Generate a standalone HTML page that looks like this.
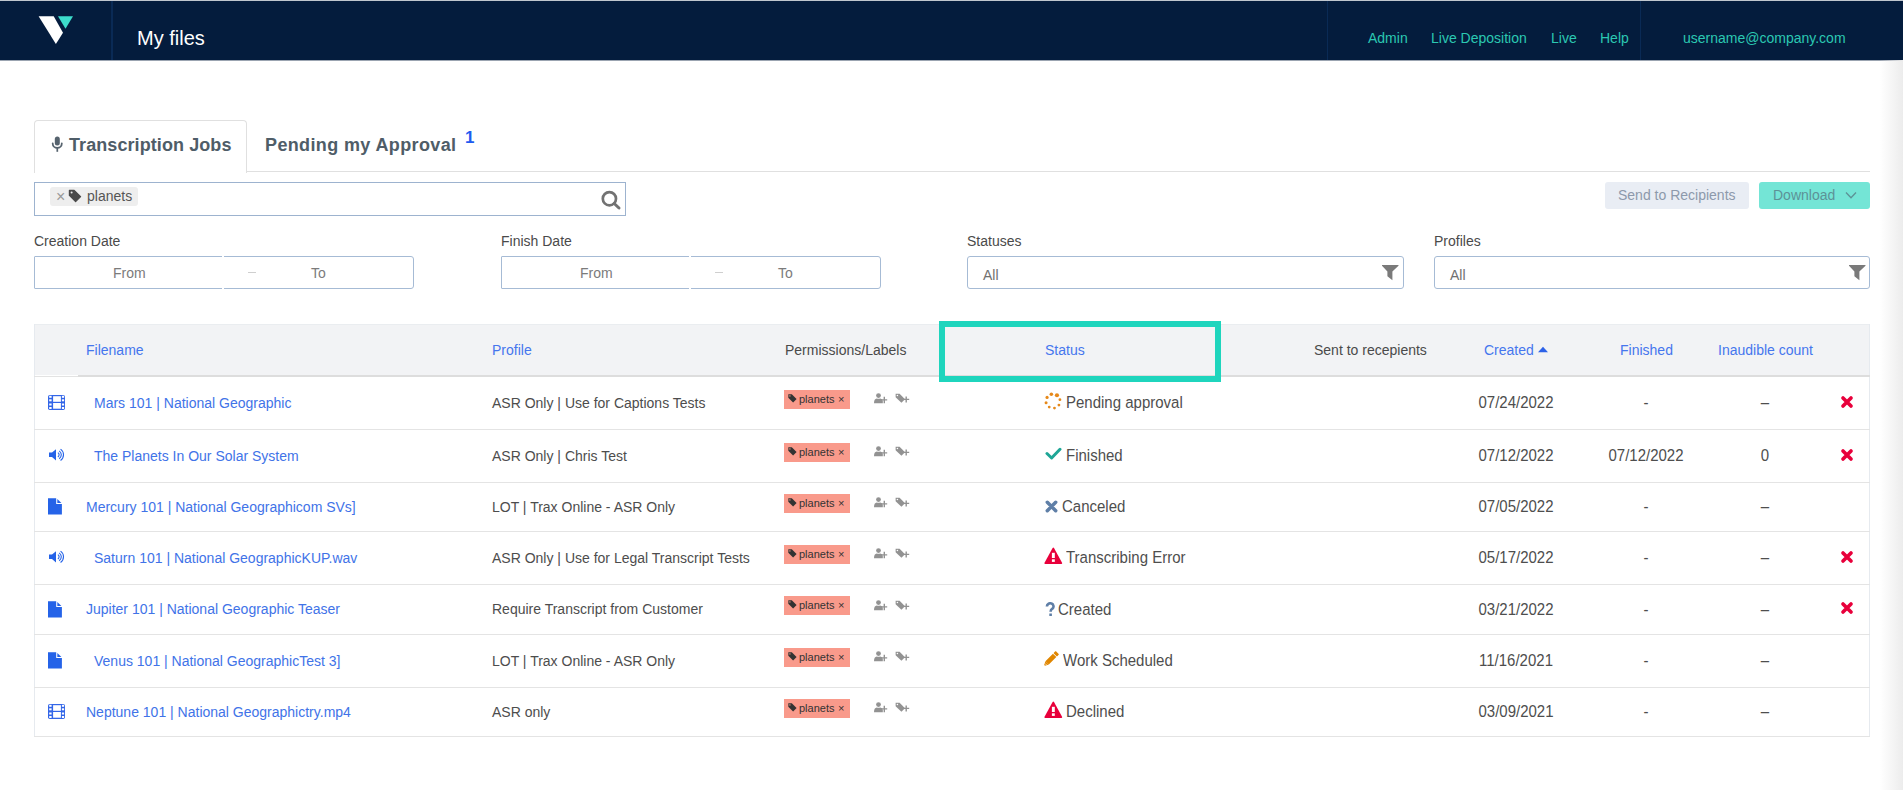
<!DOCTYPE html>
<html><head><meta charset="utf-8">
<style>
*{box-sizing:border-box;margin:0;padding:0}
html,body{width:1903px;height:790px;overflow:hidden;background:#fff;font-family:"Liberation Sans",sans-serif;color:#444}
.a{position:absolute;white-space:nowrap}
#hdr{position:absolute;left:0;top:1px;width:1903px;height:59px;background:#041c3d}
.nav{font-size:14px;line-height:14px;color:#2bc8b2}
.lbl{font-size:14px;line-height:14px;color:#4a4a4a}
.inp{position:absolute;border:1px solid #a6bbd5;border-radius:3px;height:33px;background:#fff}
.rng{border-radius:1px 3px 3px 1px}
.ph{font-size:14px;line-height:14px;color:#7b7b7b}
.th{font-size:14px;line-height:14px;top:343px;color:#4a4a4a}
.th.b{color:#4576ee}
.td{font-size:14px;line-height:14px;color:#4d4d4d}
.fn{color:#4173e8}
.chip{width:66px;height:19px;background:#f99a8b;font-size:11px;line-height:11px;color:#333}
.st{font-size:15px;line-height:15px;color:#4e4e4e;transform:scaleY(1.07);transform-origin:0 12.7px}
.ctr{width:200px;text-align:center}
</style></head><body>
<!-- HEADER -->
<div class="a" style="left:0;top:0;width:1903px;height:1px;background:rgba(4,28,61,0.25)"></div>
<div class="a" style="left:0;top:60px;width:1903px;height:1px;background:rgba(4,28,61,0.4)"></div>
<div id="hdr">
  <svg class="a" style="left:0;top:-1px" width="120" height="60" viewBox="0 -1 120 60">
    <polygon points="38.6,16.2 53.7,16.2 63,32.8 55.9,44" fill="#fff" transform="translate(0,-1)"/>
    <polygon points="58,16.2 73,16.2 65.5,28.8" fill="#3ddccb" transform="translate(0,-1)"/>
  </svg>
  <div class="a" style="left:111px;top:0;width:2px;height:59px;background:#0a2a55"></div>
  <div class="a" style="left:137px;top:27px;font-size:20px;line-height:20px;color:#fff">My files</div>
  <div class="a" style="left:1327px;top:0;width:1px;height:59px;background:#0a2a55"></div>
  <div class="a nav" style="left:1368px;top:30px">Admin</div>
  <div class="a nav" style="left:1431px;top:30px">Live Deposition</div>
  <div class="a nav" style="left:1551px;top:30px">Live</div>
  <div class="a nav" style="left:1600px;top:30px">Help</div>
  <div class="a" style="left:1640px;top:0;width:1px;height:59px;background:#0a2a55"></div>
  <div class="a nav" style="left:1683px;top:30px">username@company.com</div>
</div>

<!-- TABS -->
<div class="a" style="left:246px;top:171px;width:1624px;height:1px;background:#e0e0e0"></div>
<div class="a" style="left:34px;top:120px;width:213px;height:53px;border:1px solid #e0e0e0;border-bottom:none;border-radius:4px 4px 0 0;background:#fff"></div>
<svg class="a" style="left:50px;top:136px" width="14" height="17" viewBox="0 0 14 17">
  <rect x="4.8" y="0.6" width="5" height="8.8" rx="2.5" fill="#56636e"/>
  <path d="M2.7 7.4 A4.55 4.4 0 0 0 11.8 7.4" fill="none" stroke="#56636e" stroke-width="1.8" stroke-linecap="round"/>
  <rect x="6.45" y="11.3" width="1.7" height="4.5" fill="#56636e"/>
</svg>
<div class="a" style="left:69px;top:136px;font-size:18px;line-height:18px;font-weight:bold;letter-spacing:0.08px;color:#4f5d68">Transcription Jobs</div>
<div class="a" style="left:265px;top:136px;font-size:18px;line-height:18px;font-weight:bold;letter-spacing:0.37px;color:#4f5d68">Pending my Approval</div>
<div class="a" style="left:465px;top:129px;font-size:17px;line-height:17px;font-weight:bold;color:#1f5bf0">1</div>

<!-- SEARCH -->
<div class="a" style="left:34px;top:182px;width:592px;height:34px;border:1px solid #9db3cf;background:#fff"></div>
<div class="a" style="left:50px;top:187px;width:88px;height:19px;border-radius:3px;background:#eeeeee"></div>
<div class="a" style="left:56px;top:189px;font-size:16px;line-height:16px;color:#9a9a9a">×</div>
<svg class="a" style="left:68px;top:189px" width="14" height="14" viewBox="0 0 14 14">
  <path d="M1.4 1.4 H6.2 L12.6 7.6 L7.6 12.6 L1.4 6.4 Z" fill="#4a4a4a" stroke="#4a4a4a" stroke-width="1.2" stroke-linejoin="round"/>
  <circle cx="3.6" cy="3.6" r="1" fill="#eee"/>
</svg>
<div class="a" style="left:87px;top:189px;font-size:14px;line-height:14px;color:#555">planets</div>
<svg class="a" style="left:600px;top:189px" width="24" height="24" viewBox="0 0 24 24">
  <circle cx="9.4" cy="9.7" r="6.6" fill="none" stroke="#727272" stroke-width="2.7"/>
  <line x1="14.2" y1="14.5" x2="19" y2="19" stroke="#727272" stroke-width="3" stroke-linecap="round"/>
</svg>

<!-- BUTTONS -->
<div class="a" style="left:1605px;top:182px;width:144px;height:27px;border-radius:3px;background:#e9edf4"></div>
<div class="a" style="left:1618px;top:188px;font-size:14px;line-height:14px;color:#8d99ab">Send to Recipients</div>
<div class="a" style="left:1759px;top:182px;width:111px;height:27px;border-radius:3px;background:#74e5d6"></div>
<div class="a" style="left:1773px;top:188px;font-size:14px;line-height:14px;color:#5d9296">Download</div>
<svg class="a" style="left:1845px;top:191px" width="12" height="9" viewBox="0 0 12 9">
  <path d="M1 1.5 L6 6.8 L11 1.5" fill="none" stroke="#5d9296" stroke-width="1.3"/>
</svg>

<!-- FILTERS -->
<div class="a lbl" style="left:34px;top:234px">Creation Date</div>
<div class="inp rng" style="left:34px;top:256px;width:380px"></div>
<div class="a" style="left:222px;top:256px;width:2px;height:1px;background:#fff"></div>
<div class="a" style="left:222px;top:288px;width:2px;height:1px;background:#fff"></div>
<div class="a ph" style="left:113px;top:266px">From</div>
<div class="a" style="left:248px;top:272px;width:8px;height:1px;background:#cfcfcf"></div>
<div class="a ph" style="left:311px;top:266px">To</div>

<div class="a lbl" style="left:501px;top:234px">Finish Date</div>
<div class="inp rng" style="left:501px;top:256px;width:380px"></div>
<div class="a" style="left:689px;top:256px;width:2px;height:1px;background:#fff"></div>
<div class="a" style="left:689px;top:288px;width:2px;height:1px;background:#fff"></div>
<div class="a ph" style="left:580px;top:266px">From</div>
<div class="a" style="left:715px;top:272px;width:8px;height:1px;background:#cfcfcf"></div>
<div class="a ph" style="left:778px;top:266px">To</div>

<div class="a lbl" style="left:967px;top:234px">Statuses</div>
<div class="inp" style="left:967px;top:256px;width:437px"></div>
<div class="a ph" style="left:983px;top:268px;color:#707070">All</div>
<svg class="a" style="left:1382px;top:264px" width="17" height="17" viewBox="0 0 17 17">
  <path d="M0 1 H16.5 V1.8 L10.4 7.5 V16.3 L5.4 12.3 V7.5 L0 1.8 Z" fill="#7a7a7a"/>
</svg>

<div class="a lbl" style="left:1434px;top:234px">Profiles</div>
<div class="inp" style="left:1434px;top:256px;width:436px"></div>
<div class="a ph" style="left:1450px;top:268px;color:#707070">All</div>
<svg class="a" style="left:1849px;top:264px" width="17" height="17" viewBox="0 0 17 17">
  <path d="M0 1 H16.5 V1.8 L10.4 7.5 V16.3 L5.4 12.3 V7.5 L0 1.8 Z" fill="#7a7a7a"/>
</svg>

<!-- TABLE -->
<!--TBL-->
<div class="a" style="left:34px;top:324px;width:1836px;height:51px;background:#f2f3f5"></div>
<div class="a" style="left:34px;top:324px;width:1836px;height:1px;background:#eaedf0"></div>
<div class="a" style="left:34px;top:324px;width:1px;height:413px;background:#e6eaef"></div>
<div class="a" style="left:1869px;top:324px;width:1px;height:413px;background:#e6eaef"></div>
<div class="a" style="left:34px;top:376px;width:1836px;height:1px;background:#e3e3e3"></div>
<div class="a" style="left:78px;top:375px;width:1792px;height:2px;background:#dddddd"></div>
<div class="a th b" style="left:86px">Filename</div>
<div class="a th b" style="left:492px">Profile</div>
<div class="a th" style="left:785px">Permissions/Labels</div>
<div class="a th b" style="left:1045px">Status</div>
<div class="a th" style="left:1314px">Sent to recepients</div>
<div class="a th b" style="left:1484px">Created</div>
<svg class="a" style="left:1537px;top:346px" width="12" height="7" viewBox="0 0 12 7"><path d="M1 6.2 L6 0.8 L11 6.2 Z" fill="#2d62e8"/></svg>
<div class="a th b" style="left:1620px">Finished</div>
<div class="a th b" style="left:1718px">Inaudible count</div>
<div class="a" style="left:34px;top:429px;width:1836px;height:1px;background:#e4e4e4"></div>
<svg class="a" style="left:48px;top:395px" width="17" height="15" viewBox="0 0 17 15"><rect x="0" y="0" width="17" height="15" rx="1.8" fill="#3366e8"/><rect x="5.1" y="1.2" width="7.8" height="5.6" fill="#fff"/><rect x="5.1" y="8" width="7.8" height="5.7" fill="#fff"/><g fill="#fff"><rect x="1.2" y="0.8" width="2.4" height="2"/><rect x="1.2" y="4.3" width="2.4" height="2"/><rect x="1.2" y="8.5" width="2.4" height="2"/><rect x="1.2" y="12" width="2.4" height="2"/><rect x="13.9" y="0.8" width="2.2" height="2"/><rect x="13.9" y="4.3" width="2.2" height="2"/><rect x="13.9" y="8.5" width="2.2" height="2"/><rect x="13.9" y="12" width="2.2" height="2"/></g></svg>
<div class="a td fn" style="left:94px;top:396px">Mars 101 | National Geographic</div>
<div class="a td" style="left:492px;top:396px">ASR Only | Use for Captions Tests</div>
<div class="a chip" style="left:784px;top:390px"><svg class="a" style="left:4px;top:4px" width="9" height="9" viewBox="0 0 9 9"><path d="M0.3 0.3 H3.8 L8.6 5.1 L5.1 8.6 L0.3 3.8 Z" fill="#333"/><circle cx="1.9" cy="1.9" r="0.7" fill="#f99a8b"/></svg><span class="a" style="left:15px;top:4px">planets</span><span class="a" style="left:54px;top:4px;font-size:11px">×</span></div>
<svg class="a" style="left:873px;top:393px" width="15" height="11" viewBox="0 0 15 11"><circle cx="5.5" cy="2.6" r="2.4" fill="#929292"/><path d="M1 10.3 Q1 5.6 3.8 5.4 Q5.5 6.3 7.2 5.4 Q9.6 5.6 9.8 8 V10.3 Z" fill="#929292"/><path d="M8.4 6.9 H14.2 M11.3 3.8 V10.2" stroke="#929292" stroke-width="1.4"/></svg>
<svg class="a" style="left:895px;top:393px" width="15" height="11" viewBox="0 0 15 11"><path d="M0.6 0.8 H4.6 L10 6.2 L6.4 9.8 L0.6 4.2 Z" fill="#929292"/><circle cx="2.4" cy="2.5" r="0.8" fill="#fff"/><path d="M8.2 6.4 H14.2 M11.2 3.4 V9.4" stroke="#929292" stroke-width="1.4"/></svg>
<svg class="a" style="left:1044px;top:392px" width="18" height="18" viewBox="0 0 18 18"><g fill="#e6891a"><circle cx="12.95" cy="3.24" r="2.1"/><circle cx="7.36" cy="2.25" r="1.8"/><circle cx="3.08" cy="5.38" r="1.6"/><circle cx="2.09" cy="10.65" r="1.5"/><circle cx="5.22" cy="15.09" r="1.4"/><circle cx="10.48" cy="16.08" r="1.4"/><circle cx="14.93" cy="13.12" r="1.4"/><circle cx="15.91" cy="7.69" r="1.4"/></g></svg>
<div class="a st" style="left:1066px;top:395px">Pending approval</div>
<div class="a st ctr" style="left:1416px;top:395px">07/24/2022</div>
<div class="a st ctr" style="left:1546px;top:395px">-</div>
<div class="a st ctr" style="left:1665px;top:395px">–</div>
<svg class="a" style="left:1840px;top:395px" width="14" height="14" viewBox="0 0 14 14"><path d="M3 3 L11 11 M11 3 L3 11" stroke="#e8003b" stroke-width="3.7" stroke-linecap="round"/></svg>
<div class="a" style="left:34px;top:482px;width:1836px;height:1px;background:#e4e4e4"></div>
<svg class="a" style="left:48px;top:448px" width="17" height="15" viewBox="0 0 17 15"><path d="M1 4.5 H4 L8 1.2 V12.4 L4 9.1 H1 Z" fill="#2563e8"/><g fill="none" stroke="#2563e8" stroke-width="1.1"><path d="M9.85 4.63 A2.5 2.5 0 0 1 9.85 8.97"/><path d="M11.16 2.86 A4.7 4.7 0 0 1 11.16 10.74"/><path d="M12.56 1.15 A6.9 6.9 0 0 1 12.56 12.45"/></g></svg>
<div class="a td fn" style="left:94px;top:449px">The Planets In Our Solar System</div>
<div class="a td" style="left:492px;top:449px">ASR Only | Chris Test</div>
<div class="a chip" style="left:784px;top:443px"><svg class="a" style="left:4px;top:4px" width="9" height="9" viewBox="0 0 9 9"><path d="M0.3 0.3 H3.8 L8.6 5.1 L5.1 8.6 L0.3 3.8 Z" fill="#333"/><circle cx="1.9" cy="1.9" r="0.7" fill="#f99a8b"/></svg><span class="a" style="left:15px;top:4px">planets</span><span class="a" style="left:54px;top:4px;font-size:11px">×</span></div>
<svg class="a" style="left:873px;top:446px" width="15" height="11" viewBox="0 0 15 11"><circle cx="5.5" cy="2.6" r="2.4" fill="#929292"/><path d="M1 10.3 Q1 5.6 3.8 5.4 Q5.5 6.3 7.2 5.4 Q9.6 5.6 9.8 8 V10.3 Z" fill="#929292"/><path d="M8.4 6.9 H14.2 M11.3 3.8 V10.2" stroke="#929292" stroke-width="1.4"/></svg>
<svg class="a" style="left:895px;top:446px" width="15" height="11" viewBox="0 0 15 11"><path d="M0.6 0.8 H4.6 L10 6.2 L6.4 9.8 L0.6 4.2 Z" fill="#929292"/><circle cx="2.4" cy="2.5" r="0.8" fill="#fff"/><path d="M8.2 6.4 H14.2 M11.2 3.4 V9.4" stroke="#929292" stroke-width="1.4"/></svg>
<svg class="a" style="left:1045px;top:447px" width="17" height="14" viewBox="0 0 17 14"><path d="M2 6.5 L6.6 11 L15 2.3" fill="none" stroke="#1ea696" stroke-width="3" stroke-linecap="round" stroke-linejoin="round"/></svg>
<div class="a st" style="left:1066px;top:448px">Finished</div>
<div class="a st ctr" style="left:1416px;top:448px">07/12/2022</div>
<div class="a st ctr" style="left:1546px;top:448px">07/12/2022</div>
<div class="a st ctr" style="left:1665px;top:448px">0</div>
<svg class="a" style="left:1840px;top:448px" width="14" height="14" viewBox="0 0 14 14"><path d="M3 3 L11 11 M11 3 L3 11" stroke="#e8003b" stroke-width="3.7" stroke-linecap="round"/></svg>
<div class="a" style="left:34px;top:531px;width:1836px;height:1px;background:#e4e4e4"></div>
<svg class="a" style="left:48px;top:498px" width="15" height="17" viewBox="0 0 15 17"><path d="M0 0.3 H8.2 V6 H13.9 V16.5 H0 Z" fill="#2563e8"/><path d="M9.3 0.9 L13.4 5 H9.3 Z" fill="#2563e8"/></svg>
<div class="a td fn" style="left:86px;top:500px">Mercury 101 | National Geographicom SVs]</div>
<div class="a td" style="left:492px;top:500px">LOT | Trax Online - ASR Only</div>
<div class="a chip" style="left:784px;top:494px"><svg class="a" style="left:4px;top:4px" width="9" height="9" viewBox="0 0 9 9"><path d="M0.3 0.3 H3.8 L8.6 5.1 L5.1 8.6 L0.3 3.8 Z" fill="#333"/><circle cx="1.9" cy="1.9" r="0.7" fill="#f99a8b"/></svg><span class="a" style="left:15px;top:4px">planets</span><span class="a" style="left:54px;top:4px;font-size:11px">×</span></div>
<svg class="a" style="left:873px;top:497px" width="15" height="11" viewBox="0 0 15 11"><circle cx="5.5" cy="2.6" r="2.4" fill="#929292"/><path d="M1 10.3 Q1 5.6 3.8 5.4 Q5.5 6.3 7.2 5.4 Q9.6 5.6 9.8 8 V10.3 Z" fill="#929292"/><path d="M8.4 6.9 H14.2 M11.3 3.8 V10.2" stroke="#929292" stroke-width="1.4"/></svg>
<svg class="a" style="left:895px;top:497px" width="15" height="11" viewBox="0 0 15 11"><path d="M0.6 0.8 H4.6 L10 6.2 L6.4 9.8 L0.6 4.2 Z" fill="#929292"/><circle cx="2.4" cy="2.5" r="0.8" fill="#fff"/><path d="M8.2 6.4 H14.2 M11.2 3.4 V9.4" stroke="#929292" stroke-width="1.4"/></svg>
<svg class="a" style="left:1045px;top:500px" width="13" height="13" viewBox="0 0 13 13"><path d="M2.3 2.3 L10.7 10.7 M10.7 2.3 L2.3 10.7" fill="none" stroke="#5f7fa7" stroke-width="3.5" stroke-linecap="round"/></svg>
<div class="a st" style="left:1062px;top:499px">Canceled</div>
<div class="a st ctr" style="left:1416px;top:499px">07/05/2022</div>
<div class="a st ctr" style="left:1546px;top:499px">-</div>
<div class="a st ctr" style="left:1665px;top:499px">–</div>
<div class="a" style="left:34px;top:584px;width:1836px;height:1px;background:#e4e4e4"></div>
<svg class="a" style="left:48px;top:550px" width="17" height="15" viewBox="0 0 17 15"><path d="M1 4.5 H4 L8 1.2 V12.4 L4 9.1 H1 Z" fill="#2563e8"/><g fill="none" stroke="#2563e8" stroke-width="1.1"><path d="M9.85 4.63 A2.5 2.5 0 0 1 9.85 8.97"/><path d="M11.16 2.86 A4.7 4.7 0 0 1 11.16 10.74"/><path d="M12.56 1.15 A6.9 6.9 0 0 1 12.56 12.45"/></g></svg>
<div class="a td fn" style="left:94px;top:551px">Saturn 101 | National GeographicKUP.wav</div>
<div class="a td" style="left:492px;top:551px">ASR Only | Use for Legal Transcript Tests</div>
<div class="a chip" style="left:784px;top:545px"><svg class="a" style="left:4px;top:4px" width="9" height="9" viewBox="0 0 9 9"><path d="M0.3 0.3 H3.8 L8.6 5.1 L5.1 8.6 L0.3 3.8 Z" fill="#333"/><circle cx="1.9" cy="1.9" r="0.7" fill="#f99a8b"/></svg><span class="a" style="left:15px;top:4px">planets</span><span class="a" style="left:54px;top:4px;font-size:11px">×</span></div>
<svg class="a" style="left:873px;top:548px" width="15" height="11" viewBox="0 0 15 11"><circle cx="5.5" cy="2.6" r="2.4" fill="#929292"/><path d="M1 10.3 Q1 5.6 3.8 5.4 Q5.5 6.3 7.2 5.4 Q9.6 5.6 9.8 8 V10.3 Z" fill="#929292"/><path d="M8.4 6.9 H14.2 M11.3 3.8 V10.2" stroke="#929292" stroke-width="1.4"/></svg>
<svg class="a" style="left:895px;top:548px" width="15" height="11" viewBox="0 0 15 11"><path d="M0.6 0.8 H4.6 L10 6.2 L6.4 9.8 L0.6 4.2 Z" fill="#929292"/><circle cx="2.4" cy="2.5" r="0.8" fill="#fff"/><path d="M8.2 6.4 H14.2 M11.2 3.4 V9.4" stroke="#929292" stroke-width="1.4"/></svg>
<svg class="a" style="left:1044px;top:547px" width="19" height="18" viewBox="0 0 19 18"><path d="M9.3 0.6 Q9.7 0.6 10 1.1 L18.2 16 Q18.4 16.8 17.6 16.9 H1 Q0.2 16.8 0.4 16 L8.6 1.1 Q8.9 0.6 9.3 0.6 Z" fill="#e8003b"/><rect x="7.9" y="5.8" width="2.9" height="5.2" fill="#fff"/><rect x="7.9" y="12.3" width="2.9" height="2.6" fill="#fff"/></svg>
<div class="a st" style="left:1066px;top:550px">Transcribing Error</div>
<div class="a st ctr" style="left:1416px;top:550px">05/17/2022</div>
<div class="a st ctr" style="left:1546px;top:550px">-</div>
<div class="a st ctr" style="left:1665px;top:550px">–</div>
<svg class="a" style="left:1840px;top:550px" width="14" height="14" viewBox="0 0 14 14"><path d="M3 3 L11 11 M11 3 L3 11" stroke="#e8003b" stroke-width="3.7" stroke-linecap="round"/></svg>
<div class="a" style="left:34px;top:634px;width:1836px;height:1px;background:#e4e4e4"></div>
<svg class="a" style="left:48px;top:600.5px" width="15" height="17" viewBox="0 0 15 17"><path d="M0 0.3 H8.2 V6 H13.9 V16.5 H0 Z" fill="#2563e8"/><path d="M9.3 0.9 L13.4 5 H9.3 Z" fill="#2563e8"/></svg>
<div class="a td fn" style="left:86px;top:602px">Jupiter 101 | National Geographic Teaser</div>
<div class="a td" style="left:492px;top:602px">Require Transcript from Customer</div>
<div class="a chip" style="left:784px;top:596px"><svg class="a" style="left:4px;top:4px" width="9" height="9" viewBox="0 0 9 9"><path d="M0.3 0.3 H3.8 L8.6 5.1 L5.1 8.6 L0.3 3.8 Z" fill="#333"/><circle cx="1.9" cy="1.9" r="0.7" fill="#f99a8b"/></svg><span class="a" style="left:15px;top:4px">planets</span><span class="a" style="left:54px;top:4px;font-size:11px">×</span></div>
<svg class="a" style="left:873px;top:600px" width="15" height="11" viewBox="0 0 15 11"><circle cx="5.5" cy="2.6" r="2.4" fill="#929292"/><path d="M1 10.3 Q1 5.6 3.8 5.4 Q5.5 6.3 7.2 5.4 Q9.6 5.6 9.8 8 V10.3 Z" fill="#929292"/><path d="M8.4 6.9 H14.2 M11.3 3.8 V10.2" stroke="#929292" stroke-width="1.4"/></svg>
<svg class="a" style="left:895px;top:600px" width="15" height="11" viewBox="0 0 15 11"><path d="M0.6 0.8 H4.6 L10 6.2 L6.4 9.8 L0.6 4.2 Z" fill="#929292"/><circle cx="2.4" cy="2.5" r="0.8" fill="#fff"/><path d="M8.2 6.4 H14.2 M11.2 3.4 V9.4" stroke="#929292" stroke-width="1.4"/></svg>
<svg class="a" style="left:1044px;top:602px" width="12" height="15" viewBox="0 0 12 15"><path d="M2.9 4.4 A3.3 3.1 0 1 1 8.4 6.7 Q6.6 7.7 6.6 9.8" fill="none" stroke="#5f7fa7" stroke-width="2.6"/><rect x="5.3" y="11.5" width="2.6" height="2.5" fill="#5f7fa7"/></svg>
<div class="a st" style="left:1058px;top:602px">Created</div>
<div class="a st ctr" style="left:1416px;top:602px">03/21/2022</div>
<div class="a st ctr" style="left:1546px;top:602px">-</div>
<div class="a st ctr" style="left:1665px;top:602px">–</div>
<svg class="a" style="left:1840px;top:601px" width="14" height="14" viewBox="0 0 14 14"><path d="M3 3 L11 11 M11 3 L3 11" stroke="#e8003b" stroke-width="3.7" stroke-linecap="round"/></svg>
<div class="a" style="left:34px;top:687px;width:1836px;height:1px;background:#e4e4e4"></div>
<svg class="a" style="left:48px;top:652px" width="15" height="17" viewBox="0 0 15 17"><path d="M0 0.3 H8.2 V6 H13.9 V16.5 H0 Z" fill="#2563e8"/><path d="M9.3 0.9 L13.4 5 H9.3 Z" fill="#2563e8"/></svg>
<div class="a td fn" style="left:94px;top:654px">Venus 101 | National GeographicTest 3]</div>
<div class="a td" style="left:492px;top:654px">LOT | Trax Online - ASR Only</div>
<div class="a chip" style="left:784px;top:648px"><svg class="a" style="left:4px;top:4px" width="9" height="9" viewBox="0 0 9 9"><path d="M0.3 0.3 H3.8 L8.6 5.1 L5.1 8.6 L0.3 3.8 Z" fill="#333"/><circle cx="1.9" cy="1.9" r="0.7" fill="#f99a8b"/></svg><span class="a" style="left:15px;top:4px">planets</span><span class="a" style="left:54px;top:4px;font-size:11px">×</span></div>
<svg class="a" style="left:873px;top:651px" width="15" height="11" viewBox="0 0 15 11"><circle cx="5.5" cy="2.6" r="2.4" fill="#929292"/><path d="M1 10.3 Q1 5.6 3.8 5.4 Q5.5 6.3 7.2 5.4 Q9.6 5.6 9.8 8 V10.3 Z" fill="#929292"/><path d="M8.4 6.9 H14.2 M11.3 3.8 V10.2" stroke="#929292" stroke-width="1.4"/></svg>
<svg class="a" style="left:895px;top:651px" width="15" height="11" viewBox="0 0 15 11"><path d="M0.6 0.8 H4.6 L10 6.2 L6.4 9.8 L0.6 4.2 Z" fill="#929292"/><circle cx="2.4" cy="2.5" r="0.8" fill="#fff"/><path d="M8.2 6.4 H14.2 M11.2 3.4 V9.4" stroke="#929292" stroke-width="1.4"/></svg>
<svg class="a" style="left:1044px;top:650px;overflow:visible" width="16" height="16" viewBox="0 0 16 16"><g transform="translate(-0.9 0.9) rotate(45 8 8)" fill="#e08600"><rect x="5.6" y="-0.8" width="4.8" height="3" rx="0.5"/><rect x="5.6" y="3" width="4.8" height="10.6"/><path d="M5.6 13.6 H10.4 L8.6 17.2 H7.4 Z"/></g><path d="M1.2 13.6 L2.4 14.8" stroke="#fff" stroke-width="0.9"/></svg>
<div class="a st" style="left:1063px;top:653px">Work Scheduled</div>
<div class="a st ctr" style="left:1416px;top:653px">11/16/2021</div>
<div class="a st ctr" style="left:1546px;top:653px">-</div>
<div class="a st ctr" style="left:1665px;top:653px">–</div>
<div class="a" style="left:34px;top:736px;width:1836px;height:1px;background:#e4e4e4"></div>
<svg class="a" style="left:48px;top:704px" width="17" height="15" viewBox="0 0 17 15"><rect x="0" y="0" width="17" height="15" rx="1.8" fill="#3366e8"/><rect x="5.1" y="1.2" width="7.8" height="5.6" fill="#fff"/><rect x="5.1" y="8" width="7.8" height="5.7" fill="#fff"/><g fill="#fff"><rect x="1.2" y="0.8" width="2.4" height="2"/><rect x="1.2" y="4.3" width="2.4" height="2"/><rect x="1.2" y="8.5" width="2.4" height="2"/><rect x="1.2" y="12" width="2.4" height="2"/><rect x="13.9" y="0.8" width="2.2" height="2"/><rect x="13.9" y="4.3" width="2.2" height="2"/><rect x="13.9" y="8.5" width="2.2" height="2"/><rect x="13.9" y="12" width="2.2" height="2"/></g></svg>
<div class="a td fn" style="left:86px;top:705px">Neptune 101 | National Geographictry.mp4</div>
<div class="a td" style="left:492px;top:705px">ASR only</div>
<div class="a chip" style="left:784px;top:699px"><svg class="a" style="left:4px;top:4px" width="9" height="9" viewBox="0 0 9 9"><path d="M0.3 0.3 H3.8 L8.6 5.1 L5.1 8.6 L0.3 3.8 Z" fill="#333"/><circle cx="1.9" cy="1.9" r="0.7" fill="#f99a8b"/></svg><span class="a" style="left:15px;top:4px">planets</span><span class="a" style="left:54px;top:4px;font-size:11px">×</span></div>
<svg class="a" style="left:873px;top:702px" width="15" height="11" viewBox="0 0 15 11"><circle cx="5.5" cy="2.6" r="2.4" fill="#929292"/><path d="M1 10.3 Q1 5.6 3.8 5.4 Q5.5 6.3 7.2 5.4 Q9.6 5.6 9.8 8 V10.3 Z" fill="#929292"/><path d="M8.4 6.9 H14.2 M11.3 3.8 V10.2" stroke="#929292" stroke-width="1.4"/></svg>
<svg class="a" style="left:895px;top:702px" width="15" height="11" viewBox="0 0 15 11"><path d="M0.6 0.8 H4.6 L10 6.2 L6.4 9.8 L0.6 4.2 Z" fill="#929292"/><circle cx="2.4" cy="2.5" r="0.8" fill="#fff"/><path d="M8.2 6.4 H14.2 M11.2 3.4 V9.4" stroke="#929292" stroke-width="1.4"/></svg>
<svg class="a" style="left:1044px;top:701px" width="19" height="18" viewBox="0 0 19 18"><path d="M9.3 0.6 Q9.7 0.6 10 1.1 L18.2 16 Q18.4 16.8 17.6 16.9 H1 Q0.2 16.8 0.4 16 L8.6 1.1 Q8.9 0.6 9.3 0.6 Z" fill="#e8003b"/><rect x="7.9" y="5.8" width="2.9" height="5.2" fill="#fff"/><rect x="7.9" y="12.3" width="2.9" height="2.6" fill="#fff"/></svg>
<div class="a st" style="left:1066px;top:704px">Declined</div>
<div class="a st ctr" style="left:1416px;top:704px">03/09/2021</div>
<div class="a st ctr" style="left:1546px;top:704px">-</div>
<div class="a st ctr" style="left:1665px;top:704px">–</div>
<div class="a" style="left:1880px;top:60px;width:23px;height:730px;background:linear-gradient(to right,rgba(236,236,236,0),#ececec)"></div>
<div class="a" style="left:939px;top:321px;width:282px;height:61px;border:6px solid #1fd5bd"></div>
<!--/TBL-->

</body></html>
